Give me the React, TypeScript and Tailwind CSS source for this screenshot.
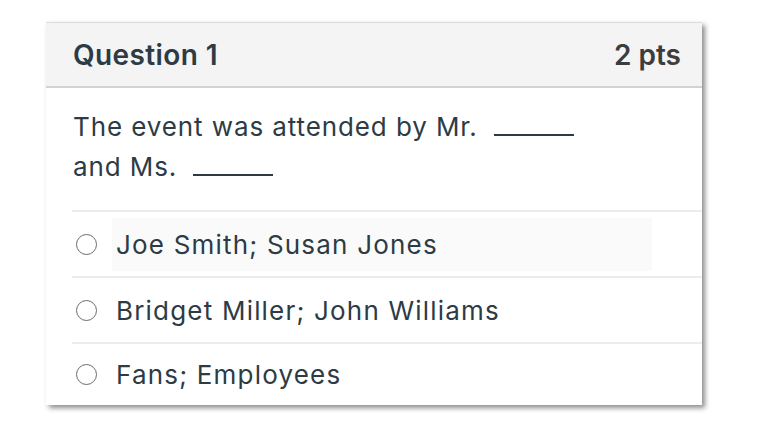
import React from 'react';

const answers = ['Joe Smith; Susan Jones', 'Bridget Miller; John Williams', 'Fans; Employees'];

function Blank() {
  return <span className="inline-block w-[80px] h-[2px] bg-[#2d3b45] align-baseline ml-[16px]" />;
}

export default function App() {
  return (
    <div className="w-[768px] h-[432px] bg-white pt-[22px] pl-[46px] font-['Inter',sans-serif] text-[#2d3b45]">
      <div className="w-[656px] bg-white border-t border-[#dcdcdc] shadow-[3px_3px_5px_rgba(0,0,0,0.45)]">
        <div className="h-[65px] bg-[#f4f4f4] border-b-2 border-[#d2d2d2] flex items-center justify-between pl-[27px] pr-[21px]">
          <span className="text-[28px] font-semibold tracking-[0.4px]">Question 1</span>
          <span className="text-[28px] font-semibold text-[#3d3d3d]">2 pts</span>
        </div>
        <div className="pl-[27px] pt-[19px] pb-[23px] text-[26px] leading-[40px] tracking-[0.9px]">
          <p>
            The event was attended by Mr.
            <Blank />
          </p>
          <p>
            and Ms.
            <Blank />
          </p>
        </div>
        <div className="ml-[26px]">
          {answers.map((a, i) => (
            <div
              key={a}
              className={
                'border-t-2 border-[#ececec] flex items-center ' + (i === 2 ? 'h-[63px]' : 'h-[66px]')
              }
            >
              <span className="ml-[4px] w-[21px] h-[21px] rounded-full border-[1.5px] border-[#6b6b6b] shrink-0" />
              <span
                className={
                  'ml-[15px] pl-[4px] flex items-center h-[53px] text-[26px] tracking-[1.2px] ' +
                  (i === 0 ? 'w-[540px] bg-[#fafafa]' : '')
                }
              >
                {a}
              </span>
            </div>
          ))}
        </div>
      </div>
    </div>
  );
}
